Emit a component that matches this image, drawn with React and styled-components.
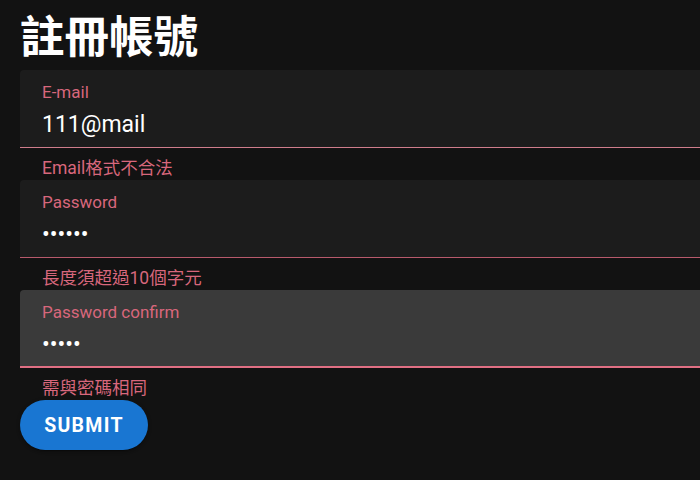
import React from "react";
import styled, { createGlobalStyle } from "styled-components";

const Global = createGlobalStyle`
  html, body { margin: 0; padding: 0; background: #121212; overflow: hidden; }
  body { font-family: Roboto, "Noto Sans CJK TC", sans-serif; }
`;

const Page = styled.div`
  width: 700px;
  height: 480px;
  padding: 4px 0 0 20px;
  box-sizing: border-box;
  display: flex;
  flex-direction: column;
  overflow: hidden;
`;

const Title = styled.h1`
  margin: 0 0 6px 0;
  font-family: "Noto Sans CJK TC", sans-serif;
  font-size: 44.5px;
  line-height: 60px;
  font-weight: 700;
  color: #ffffff;
`;

const Field = styled.div`
  width: 680px;
  box-sizing: border-box;
  background: ${(p) => (p.$active ? "#3a3a3a" : "#1c1c1c")};
  border-radius: 4px 0 0 0;
  padding: 12px 22px ${(p) => (p.$active ? "8px" : "9px")};
  border-bottom: ${(p) => (p.$active ? "2px" : "1px")} solid ${(p) => p.$line};
  display: flex;
  flex-direction: column;
  gap: 10px;
`;

const Label = styled.label`
  font-family: Roboto, "Noto Sans CJK TC", sans-serif;
  font-size: 17px;
  line-height: 20px;
  color: #d8677c;
`;

const Value = styled.input`
  all: unset;
  font-family: Roboto, sans-serif;
  font-size: 23px;
  line-height: 26px;
  height: 26px;
  color: #ffffff;
  width: 100%;
`;

const Helper = styled.div`
  height: 32px;
  box-sizing: border-box;
  padding: 8px 0 0 22px;
  font-family: Roboto, "Noto Sans CJK TC", sans-serif;
  font-size: 17.5px;
  line-height: 24px;
  color: #d8677c;
`;

const Submit = styled.button`
  width: 128px;
  height: 50px;
  border: none;
  border-radius: 25px;
  background: #1976d2;
  color: #ffffff;
  font-family: Roboto, sans-serif;
  font-weight: 700;
  font-size: 19.5px;
  letter-spacing: 1.3px;
  box-shadow: 0 3px 1px -2px rgba(0,0,0,0.2), 0 2px 2px 0 rgba(0,0,0,0.14), 0 1px 5px 0 rgba(0,0,0,0.12);
  cursor: pointer;
`;

const fields = [
  { label: "E-mail", type: "text", value: "111@mail", helper: "Email格式不合法", line: "#cf7d8c" },
  { label: "Password", type: "password", value: "123456", helper: "長度須超過10個字元", line: "#b85a6c" },
  { label: "Password confirm", type: "password", value: "12345", helper: "需與密碼相同", line: "#e06f83", active: true },
];

export default function App() {
  return (
    <>
      <Global />
      <Page>
        <Title>註冊帳號</Title>
        {fields.map((f) => (
          <React.Fragment key={f.label}>
            <Field $active={f.active} $line={f.line}>
              <Label>{f.label}</Label>
              <Value type={f.type} defaultValue={f.value} readOnly />
            </Field>
            <Helper>{f.helper}</Helper>
          </React.Fragment>
        ))}
        <Submit>SUBMIT</Submit>
      </Page>
    </>
  );
}
